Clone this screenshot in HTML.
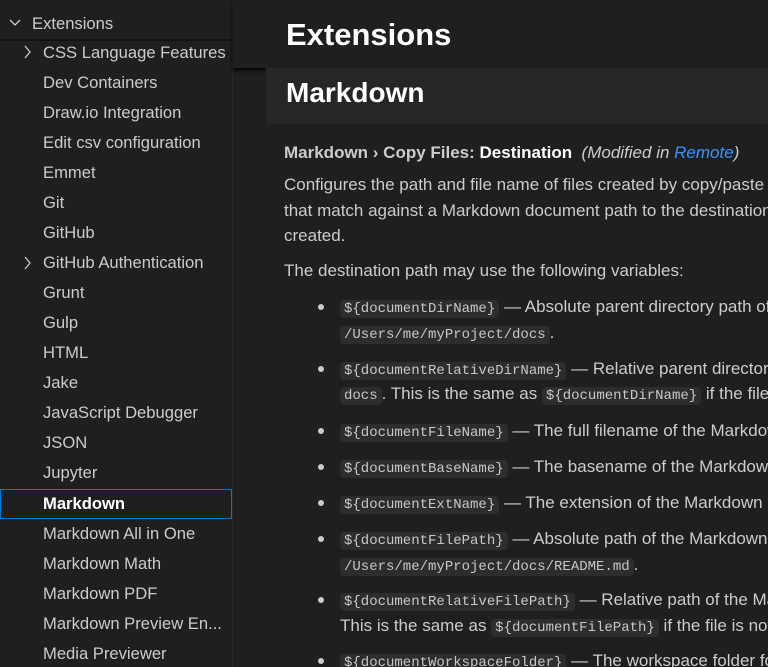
<!DOCTYPE html>
<html><head><meta charset="utf-8"><style>
html,body{margin:0;width:768px;height:667px;overflow:hidden}
body{background:#1f1f1f;font-family:"Liberation Sans",sans-serif;color:#cccccc;position:relative}
.sb{position:absolute;left:0;top:0;width:232px;height:667px;background:#1f1f1f;border-right:1px solid #2b2b2b}
.r{position:absolute;left:43px;font-size:16.6px;line-height:30px;white-space:nowrap;color:#cccccc}
.sel{position:absolute;left:0;top:489px;width:230px;height:28px;border:1px solid #0078d4}
.top{position:absolute;left:233px;top:0;width:535px;height:68px;background:#1f1f1f;box-shadow:0 2px 4px #000}
.band{position:absolute;left:266px;top:68px;width:502px;height:56px;background:#262626}
.l{position:absolute;white-space:nowrap;font-size:17px;color:#cccccc;line-height:26px}
code{font-family:"Liberation Mono",monospace;font-size:14px;background:#2d2d2d;border-radius:4px;padding:1px 4px;color:#c8c8c8}
.b{position:absolute;left:318px;width:6px;height:6px;border-radius:50%;background:#cccccc}
</style></head><body>
<div class="sb">
<svg style="position:absolute;left:8px;top:18px" width="14" height="10"><path d="M2 2 L7 7 L12 2" stroke="#ccc" stroke-width="1.3" fill="none"/></svg>
<div class="r" style="left:32px;top:9px">Extensions</div>
<div style="position:absolute;left:0;top:39px;width:232px;height:2px;background:#111"></div>
<svg style="position:absolute;left:23px;top:45px" width="10" height="14"><path d="M2 1 L7 7 L2 13" stroke="#ccc" stroke-width="1.3" fill="none"/></svg>
<div class="r" style="top:38px">CSS Language Features</div>
<div class="r" style="top:68px">Dev Containers</div>
<div class="r" style="top:98px">Draw.io Integration</div>
<div class="r" style="top:128px">Edit csv configuration</div>
<div class="r" style="top:158px">Emmet</div>
<div class="r" style="top:188px">Git</div>
<div class="r" style="top:218px">GitHub</div>
<svg style="position:absolute;left:23px;top:256px" width="10" height="14"><path d="M2 1 L7 7 L2 13" stroke="#ccc" stroke-width="1.3" fill="none"/></svg>
<div class="r" style="top:248px">GitHub Authentication</div>
<div class="r" style="top:278px">Grunt</div>
<div class="r" style="top:308px">Gulp</div>
<div class="r" style="top:338px">HTML</div>
<div class="r" style="top:368px">Jake</div>
<div class="r" style="top:398px">JavaScript Debugger</div>
<div class="r" style="top:428px">JSON</div>
<div class="r" style="top:458px">Jupyter</div>
<div class="sel"></div>
<div class="r" style="top:489px;color:#fff;font-weight:bold">Markdown</div>
<div class="r" style="top:519px">Markdown All in One</div>
<div class="r" style="top:549px">Markdown Math</div>
<div class="r" style="top:579px">Markdown PDF</div>
<div class="r" style="top:609px">Markdown Preview En...</div>
<div class="r" style="top:639px">Media Previewer</div>
</div>
<div class="top"></div>
<div class="band"></div>
<div style="position:absolute;left:286px;top:17px;font-size:31px;font-weight:bold;color:#fff">Extensions</div>
<div style="position:absolute;left:286px;top:77px;font-size:28px;font-weight:bold;color:#fff">Markdown</div>
<div class="l" style="left:284px;top:140px;font-weight:bold;color:#cccccc">Markdown › Copy Files: <span style="color:#fff">Destination</span> <span style="font-weight:normal;font-style:italic">&nbsp;(Modified in <span style="color:#3794ff">Remote</span>)</span></div>
<div class="l" style="left:284px;top:172px">Configures the path and file name of files created by copy/paste</div>
<div class="l" style="left:284px;top:198px">that match against a Markdown document path to the destination</div>
<div class="l" style="left:284px;top:223px">created.</div>
<div class="l" style="left:284px;top:258px">The destination path may use the following variables:</div>
<div class="b" style="top:304px"></div>
<div class="l" style="left:340px;top:294px"><code>${documentDirName}</code> — Absolute parent directory path of the</div>
<div class="l" style="left:340px;top:320px"><code>/Users/me/myProject/docs</code>.</div>
<div class="b" style="top:366px"></div>
<div class="l" style="left:340px;top:356px"><code>${documentRelativeDirName}</code> — Relative parent directory</div>
<div class="l" style="left:340px;top:381px"><code>docs</code>. This is the same as <code>${documentDirName}</code> if the file</div>
<div class="b" style="top:428px"></div>
<div class="l" style="left:340px;top:418px"><code>${documentFileName}</code> — The full filename of the Markdown</div>
<div class="b" style="top:464px"></div>
<div class="l" style="left:340px;top:454px"><code>${documentBaseName}</code> — The basename of the Markdown</div>
<div class="b" style="top:500px"></div>
<div class="l" style="left:340px;top:490px"><code>${documentExtName}</code> — The extension of the Markdown</div>
<div class="b" style="top:536px"></div>
<div class="l" style="left:340px;top:526px"><code>${documentFilePath}</code> — Absolute path of the Markdown</div>
<div class="l" style="left:340px;top:552px"><code>/Users/me/myProject/docs/README.md</code>.</div>
<div class="b" style="top:597px"></div>
<div class="l" style="left:340px;top:587px"><code>${documentRelativeFilePath}</code> — Relative path of the Ma</div>
<div class="l" style="left:340px;top:613px">This is the same as <code>${documentFilePath}</code> if the file is not</div>
<div class="b" style="top:658px"></div>
<div class="l" style="left:340px;top:648px"><code>${documentWorkspaceFolder}</code> — The workspace folder for</div>
</body></html>
